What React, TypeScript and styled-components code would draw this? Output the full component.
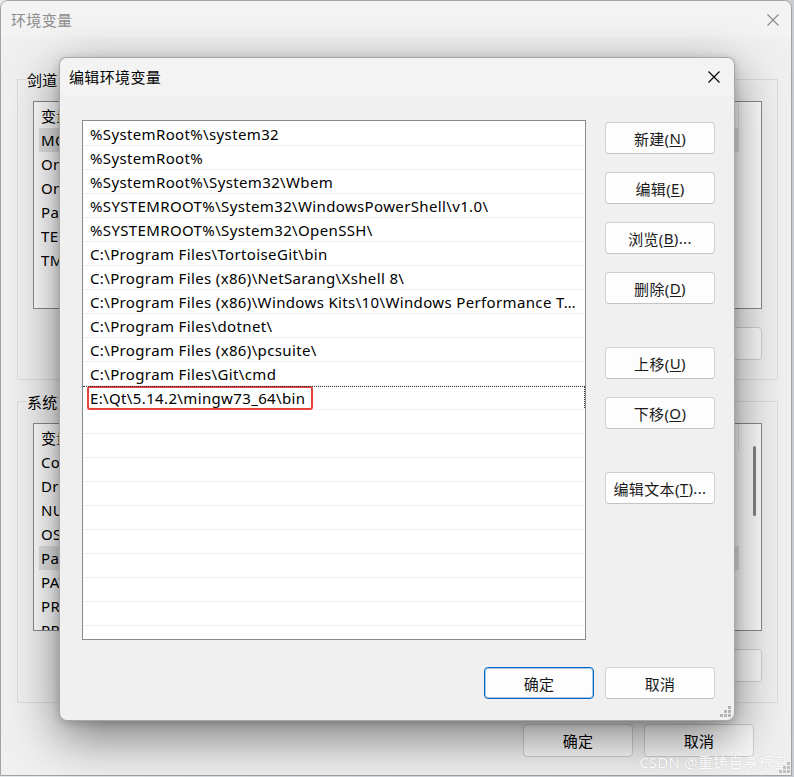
import React from "react";
import styled, { createGlobalStyle, css } from "styled-components";

const FONT = `"Noto Sans", "Noto Sans CJK SC", sans-serif`;

const GlobalStyle = createGlobalStyle`
  html, body { margin: 0; padding: 0; }
  body { background: #d4d8dd; font-family: ${FONT}; font-size: 15px; letter-spacing: 0.36px; }
  * { box-sizing: border-box; }
`;

const Desktop = styled.div`
  position: relative;
  width: 794px;
  height: 777px;
  overflow: hidden;
  background: linear-gradient(90deg, #e6e9ec, #c9cdd2);
`;

/* ---------- background window ---------- */
const BgWindow = styled.div`
  width: 792px;
  height: 776px;
  background: #f0f0f0;
  border: 1px solid #a3a3a3;
  border-radius: 8px 8px 0 0;
  display: flex;
  flex-direction: column;
  overflow: hidden;
`;

const BgTitleBar = styled.div`
  height: 37px;
  flex: none;
  display: flex;
  align-items: center;
  justify-content: space-between;
  padding: 0 12px 0 10px;
  background: #f3f3f3;
  color: #8d8d8d;
`;

const BgBody = styled.div`
  flex: 1;
  display: flex;
  flex-direction: column;
  padding: 41px 13px 0 16px;
`;

const Group = styled.div<{ $gap?: number }>`
  width: 761px;
  height: ${(p) => (p.$gap ? 302 : 301)}px;
  margin-top: ${(p) => p.$gap ?? 0}px;
  border: 1px solid #dcdcdc;
  padding: 0 15px;
  display: flex;
  flex-direction: column;
`;

const GroupLabel = styled.div`
  margin: -10px 0 0 -7px;
  padding: 0 1px;
  width: fit-content;
  line-height: 20px;
  background: #f0f0f0;
  color: #000;
`;

const BgList = styled.div<{ $height: number }>`
  margin-top: 11px;
  height: ${(p) => p.$height}px;
  border: 1px solid #868a8e;
  background: #fff;
  display: flex;
  overflow: hidden;
`;

const BgListContent = styled.div`
  flex: 1;
  display: flex;
  flex-direction: column;
`;

const BgHeader = styled.div`
  height: 26px;
  flex: none;
  display: flex;
  align-items: stretch;
`;

const BgHeaderCell = styled.div`
  width: 705px;
  display: flex;
  align-items: center;
  padding-left: 7px;
  border-right: 1px solid #e5e5e5;
`;

const BgRow = styled.div<{ $selected?: boolean }>`
  width: 700px;
  height: 24px;
  flex: none;
  display: flex;
  align-items: center;
  margin-left: 5px;
  padding-left: 2px;
  white-space: nowrap;
  overflow: hidden;
  background: ${(p) => (p.$selected ? "#e5e5e5" : "transparent")};
`;

const ScrollTrack = styled.div`
  width: 14px;
  flex: none;
  display: flex;
  justify-content: center;
  padding-top: 22px;
`;

const ScrollThumb = styled.div`
  width: 3px;
  height: 70px;
  border-radius: 2px;
  background: #858585;
`;

const BgButtonRow = styled.div<{ $top: number; $right?: number }>`
  margin-top: ${(p) => p.$top}px;
  padding-right: ${(p) => p.$right ?? 0}px;
  display: flex;
  justify-content: flex-end;
  gap: 11px;
`;

const BgButton = styled.div`
  width: 110px;
  height: 33px;
  display: flex;
  align-items: center;
  justify-content: center;
  background: #fbfbfb;
  border: 1px solid #cfcfcf;
  border-radius: 4px;
  color: #000;
`;

/* ---------- dialog ---------- */
const Dialog = styled.section`
  position: absolute;
  left: 59px;
  top: 57px;
  width: 676px;
  height: 664px;
  background: #f0f0f0;
  border: 1px solid rgba(0, 0, 0, 0.3);
  border-radius: 8px;
  box-shadow: 0 16px 50px rgba(0, 0, 0, 0.5), 0 2px 10px rgba(0, 0, 0, 0.18);
  display: flex;
  flex-direction: column;
  overflow: hidden;
`;

const DialogTitleBar = styled.header`
  height: 37px;
  flex: none;
  display: flex;
  align-items: center;
  justify-content: space-between;
  padding: 0 14px 0 9px;
  background: #f3f3f3;
  color: #000;
`;

const DialogBody = styled.div`
  flex: 1;
  display: grid;
  grid-template-columns: 504px 110px;
  grid-template-rows: 520px auto;
  column-gap: 19px;
  row-gap: 27px;
  padding: 25px 18px 0 22px;
`;

const PathList = styled.div`
  border: 1px solid #868a8e;
  background: #fff;
  padding-top: 1px;
  overflow: hidden;
  color: #000;
`;

const PathRow = styled.div<{ $focused?: boolean }>`
  position: relative;
  height: 24px;
  line-height: 24px;
  padding: 0 3px 0 7px;
  border-bottom: 1px solid #efefef;
  white-space: nowrap;
  overflow: hidden;
  text-overflow: ellipsis;
  ${(p) =>
    p.$focused &&
    css`
      overflow: visible;
      &::after {
        content: "";
        position: absolute;
        inset: 0 0 1px 0;
        border-top: 1px dotted #333;
        border-right: 1px dotted #333;
        pointer-events: none;
      }
    `}
`;

const Annotated = styled.span`
  display: inline-block;
  vertical-align: top;
  height: 24px;
  line-height: 21px;
  margin-left: -3px;
  padding: 0 6px 0 1px;
  border: 2px solid #e8413b;
  border-radius: 3px;
`;

const ButtonColumn = styled.div`
  padding-top: 2px;
  display: flex;
  flex-direction: column;
  gap: 43px;
`;

const ButtonGroup = styled.div`
  display: flex;
  flex-direction: column;
  gap: 18px;
`;

const Button = styled.button<{ $primary?: boolean }>`
  width: 110px;
  height: 32px;
  padding: 0;
  display: flex;
  align-items: center;
  justify-content: center;
  font-family: ${FONT};
  font-size: 15px;
  letter-spacing: 0.36px;
  color: #1a1a1a;
  background: #fdfdfd;
  border: 1px solid #d0d0d0;
  border-bottom-color: #c4c4c4;
  border-radius: 4px;
  ${(p) =>
    p.$primary &&
    css`
      border-color: #0067c0;
      box-shadow: inset 0 0 0 1px rgba(0, 103, 192, 0.35);
    `}
`;

const Footer = styled.div`
  grid-column: 1 / -1;
  display: flex;
  justify-content: flex-end;
  gap: 11px;
`;

const Mn = styled.span`
  text-decoration: underline;
  text-underline-offset: 2px;
`;

const Grip = styled.svg<{ $right: number; $bottom: number }>`
  position: absolute;
  right: ${(p) => p.$right}px;
  bottom: ${(p) => p.$bottom}px;
`;

const Watermark = styled.div`
  position: absolute;
  right: 5px;
  bottom: 5px;
  font-size: 15px;
  letter-spacing: 0.2px;
  color: rgba(255, 255, 255, 0.95);
  text-shadow: 0 0 1px rgba(0, 0, 0, 0.2);
`;

const CloseIcon: React.FC<{ color: string }> = ({ color }) => (
  <svg width="12" height="12" viewBox="0 0 12 12" aria-hidden>
    <path d="M0.5 0.5 L11.5 11.5 M11.5 0.5 L0.5 11.5" stroke={color} strokeWidth="1.1" fill="none" />
  </svg>
);

const GripDots: React.FC<{ right: number; bottom: number; color: string }> = ({ right, bottom, color }) => (
  <Grip $right={right} $bottom={bottom} width="11" height="11" viewBox="0 0 11 11" aria-hidden>
    <rect x="8" y="0" width="3" height="3" fill={color} />
    <rect x="4" y="4" width="3" height="3" fill={color} />
    <rect x="8" y="4" width="3" height="3" fill={color} />
    <rect x="0" y="8" width="3" height="3" fill={color} />
    <rect x="4" y="8" width="3" height="3" fill={color} />
    <rect x="8" y="8" width="3" height="3" fill={color} />
  </Grip>
);

const userVars = ["MOZ_PLUGIN_PATH", "OneDrive", "OneDriveConsumer", "Path", "TEMP", "TMP"];

const sysVars = [
  "ComSpec",
  "DriverData",
  "NUMBER_OF_PROCESSORS",
  "OS",
  "Path",
  "PATHEXT",
  "PROCESSOR_ARCHITECTURE",
  "PROCESSOR_IDENTIFIER",
];

const paths = [
  "%SystemRoot%\\system32",
  "%SystemRoot%",
  "%SystemRoot%\\System32\\Wbem",
  "%SYSTEMROOT%\\System32\\WindowsPowerShell\\v1.0\\",
  "%SYSTEMROOT%\\System32\\OpenSSH\\",
  "C:\\Program Files\\TortoiseGit\\bin",
  "C:\\Program Files (x86)\\NetSarang\\Xshell 8\\",
  "C:\\Program Files (x86)\\Windows Kits\\10\\Windows Performance Toolkit\\",
  "C:\\Program Files\\dotnet\\",
  "C:\\Program Files (x86)\\pcsuite\\",
  "C:\\Program Files\\Git\\cmd",
];

const VarList: React.FC<{ rows: string[]; height: number; selected: number; scroll?: boolean }> = ({
  rows,
  height,
  selected,
  scroll,
}) => (
  <BgList $height={height}>
    <BgListContent>
      <BgHeader>
        <BgHeaderCell>变量</BgHeaderCell>
      </BgHeader>
      {rows.map((k, i) => (
        <BgRow key={k} $selected={i === selected}>
          {k}
        </BgRow>
      ))}
    </BgListContent>
    <ScrollTrack>{scroll && <ScrollThumb />}</ScrollTrack>
  </BgList>
);

export default function App() {
  return (
    <>
      <GlobalStyle />
      <Desktop>
        <BgWindow>
          <BgTitleBar>
            <span>环境变量</span>
            <CloseIcon color="#8a8a8a" />
          </BgTitleBar>
          <BgBody>
            <Group>
              <GroupLabel>剑道 的用户变量(U)</GroupLabel>
              <VarList rows={userVars} height={208} selected={0} />
              <BgButtonRow $top={18}>
                <BgButton>新建(N)...</BgButton>
                <BgButton>编辑(E)...</BgButton>
                <BgButton>删除(D)</BgButton>
              </BgButtonRow>
            </Group>
            <Group $gap={21}>
              <GroupLabel>系统变量(S)</GroupLabel>
              <VarList rows={sysVars} height={208} selected={4} scroll />
              <BgButtonRow $top={18}>
                <BgButton>新建(W)...</BgButton>
                <BgButton>编辑(I)...</BgButton>
                <BgButton>删除(L)</BgButton>
              </BgButtonRow>
            </Group>
            <BgButtonRow $top={21} $right={24}>
              <BgButton>确定</BgButton>
              <BgButton>取消</BgButton>
            </BgButtonRow>
          </BgBody>
        </BgWindow>

        <Dialog>
          <DialogTitleBar>
            <span>编辑环境变量</span>
            <CloseIcon color="#000" />
          </DialogTitleBar>
          <DialogBody>
            <PathList>
              {paths.map((p) => (
                <PathRow key={p}>{p}</PathRow>
              ))}
              <PathRow $focused>
                <Annotated>E:\Qt\5.14.2\mingw73_64\bin</Annotated>
              </PathRow>
              {Array.from({ length: 10 }, (_, i) => (
                <PathRow key={`e${i}`} />
              ))}
            </PathList>
            <ButtonColumn>
              <ButtonGroup>
                <Button>
                  新建(<Mn>N</Mn>)
                </Button>
                <Button>
                  编辑(<Mn>E</Mn>)
                </Button>
                <Button>
                  浏览(<Mn>B</Mn>)...
                </Button>
                <Button>
                  删除(<Mn>D</Mn>)
                </Button>
              </ButtonGroup>
              <ButtonGroup>
                <Button>
                  上移(<Mn>U</Mn>)
                </Button>
                <Button>
                  下移(<Mn>O</Mn>)
                </Button>
              </ButtonGroup>
              <ButtonGroup>
                <Button>
                  编辑文本(<Mn>T</Mn>)...
                </Button>
              </ButtonGroup>
            </ButtonColumn>
            <Footer>
              <Button $primary>确定</Button>
              <Button>取消</Button>
            </Footer>
          </DialogBody>
          <GripDots right={3} bottom={3} color="#b4b4b4" />
        </Dialog>

        <Watermark>CSDN @重铸自身根基</Watermark>
        <GripDots right={4} bottom={4} color="#c0c0c0" />
      </Desktop>
    </>
  );
}
